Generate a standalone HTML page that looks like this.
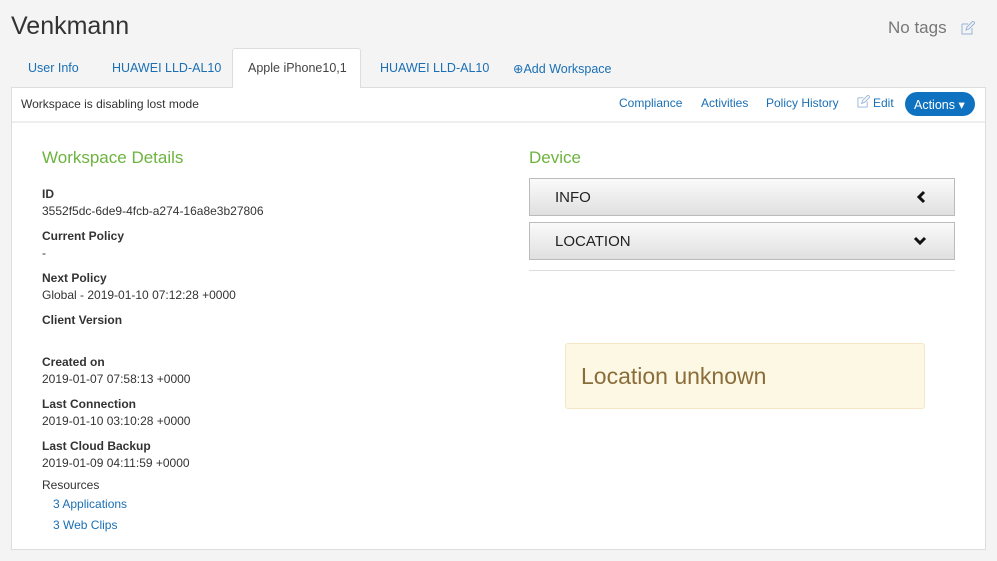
<!DOCTYPE html>
<html><head><style>
*{box-sizing:border-box;margin:0;padding:0}
body{width:997px;height:561px;background:#f4f4f4;font-family:"Liberation Sans",sans-serif;font-size:12px;color:#333;position:relative;overflow:hidden}
.a{position:absolute;white-space:nowrap}
.l{color:#1a6fb5}
.tab{position:absolute;top:61px;font-size:12.5px;color:#1a6fb5}
.lab{font-weight:bold;font-size:12px;color:#333}
.val{font-size:12px;color:#333}
.acc{position:absolute;left:529px;width:426px;height:38px;border:1px solid #bbb;background:linear-gradient(#fafafa,#e0e0e0);font-size:15px;color:#222}
.acc span{position:absolute;left:25px;top:10px}
</style></head><body>
<div class="a" style="left:11px;top:12px;font-size:25px;color:#333">Venkmann</div>
<div class="a" style="left:888px;top:18px;font-size:17px;color:#777">No tags</div>
<svg class="a" style="left:961px;top:21px" width="14" height="14" viewBox="0 0 14 14"><path d="M1 3h6M1 3v10h10V7M5 9l1-3 6-6 2 2-6 6z" fill="none" stroke="#9ab4d8" stroke-width="1"/></svg>
<div class="tab" style="left:28px">User Info</div>
<div class="tab" style="left:112px">HUAWEI LLD-AL10</div>
<div class="a" style="left:232px;top:48px;width:129px;height:40px;background:#fff;border:1px solid #ddd;border-bottom:none;border-radius:3px 3px 0 0;z-index:2"></div>
<div class="tab" style="left:248px;color:#444;z-index:3">Apple iPhone10,1</div>
<div class="tab" style="left:380px">HUAWEI LLD-AL10</div>
<div class="tab" style="left:513px">⊕Add Workspace</div>
<div class="a" style="left:11px;top:87px;width:975px;height:463px;background:#fff;border:1px solid #ddd"></div>
<div class="a" style="left:12px;top:121px;width:973px;height:2px;background:#eee"></div>
<div class="a" style="left:21px;top:97px;color:#333">Workspace is disabling lost mode</div>
<div class="a l" style="left:619px;top:96px">Compliance</div>
<div class="a l" style="left:701px;top:96px">Activities</div>
<div class="a l" style="left:766px;top:96px">Policy History</div>
<svg class="a" style="left:857px;top:95px" width="13" height="13" viewBox="0 0 14 14"><path d="M1 3h6M1 3v10h10V7M5 9l1-3 6-6 2 2-6 6z" fill="none" stroke="#9ab4d8" stroke-width="1"/></svg>
<div class="a l" style="left:873px;top:96px">Edit</div>
<div class="a" style="left:905px;top:92px;width:70px;height:24px;border-radius:12px;background:#0f72c0;color:#fff;font-size:12.5px;padding:5px 0 0 9px">Actions ▾</div>
<div class="a" style="left:42px;top:148px;font-size:17px;color:#6db33f">Workspace Details</div>
<div class="a lab" style="left:42px;top:187px">ID</div>
<div class="a val" style="left:42px;top:204px">3552f5dc-6de9-4fcb-a274-16a8e3b27806</div>
<div class="a lab" style="left:42px;top:229px">Current Policy</div>
<div class="a val" style="left:42px;top:246px">-</div>
<div class="a lab" style="left:42px;top:271px">Next Policy</div>
<div class="a val" style="left:42px;top:288px">Global - 2019-01-10 07:12:28 +0000</div>
<div class="a lab" style="left:42px;top:313px">Client Version</div>
<div class="a lab" style="left:42px;top:355px">Created on</div>
<div class="a val" style="left:42px;top:372px">2019-01-07 07:58:13 +0000</div>
<div class="a lab" style="left:42px;top:397px">Last Connection</div>
<div class="a val" style="left:42px;top:414px">2019-01-10 03:10:28 +0000</div>
<div class="a lab" style="left:42px;top:439px">Last Cloud Backup</div>
<div class="a val" style="left:42px;top:456px">2019-01-09 04:11:59 +0000</div>
<div class="a val" style="left:42px;top:478px">Resources</div>
<div class="a l" style="left:53px;top:497px">3 Applications</div>
<div class="a l" style="left:53px;top:518px">3 Web Clips</div>
<div class="a" style="left:529px;top:148px;font-size:17px;color:#6db33f">Device</div>
<div class="acc" style="top:178px"><span>INFO</span><svg class="a" style="left:386px;top:11px" width="12" height="14" viewBox="0 0 12 14"><path d="M8 2L3 7l5 5" fill="none" stroke="#111" stroke-width="3"/></svg></div>
<div class="acc" style="top:222px"><span>LOCATION</span><svg class="a" style="left:383px;top:13px" width="14" height="10" viewBox="0 0 14 10"><path d="M2 2l5 5 5-5" fill="none" stroke="#111" stroke-width="3"/></svg></div>
<div class="a" style="left:529px;top:270px;width:426px;height:1px;background:#ddd"></div>
<div class="a" style="left:565px;top:343px;width:360px;height:66px;background:#fcf8e3;border:1px solid #f5e7c4;border-radius:3px"></div>
<div class="a" style="left:581px;top:363px;font-size:23px;color:#8a6d3b">Location unknown</div>
</body></html>
